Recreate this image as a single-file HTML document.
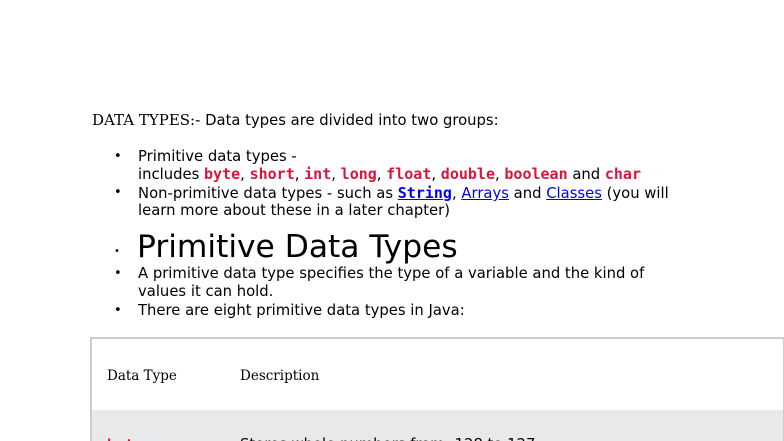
<!DOCTYPE html>
<html style="overflow:hidden;height:441px"><head><meta charset="utf-8"><style>
body{margin:0;width:784px;height:441px;overflow:hidden;background:#fff;position:relative;font-family:"DejaVu Sans",sans-serif;font-size:14.8px;color:#000}
.l{position:absolute;white-space:nowrap;line-height:18px}
.b{position:absolute;left:114px;font-size:13px}
.c{font-family:"DejaVu Sans Mono",monospace;font-weight:bold;color:#dc143c;font-size:15px}
a{color:#00e;text-decoration:underline}
.serif{font-family:"DejaVu Serif","Liberation Serif",serif}
</style></head><body>
<div class="l" style="left:92px;top:111px"><span class="serif" style="font-size:15px">DATA TYPES:</span>- Data types are divided into two groups:</div>
<div class="l b" style="top:148px">•</div>
<div class="l" style="left:138px;top:148px">Primitive data types -</div>
<div class="l" style="left:138px;top:165px">includes <span class="c">byte</span>, <span class="c">short</span>, <span class="c">int</span>, <span class="c">long</span>, <span class="c">float</span>, <span class="c">double</span>, <span class="c">boolean</span> and <span class="c">char</span></div>
<div class="l b" style="top:184px">•</div>
<div class="l" style="left:138px;top:184px">Non-primitive data types - such as <a class="c" style="color:#00e">String</a>, <a>Arrays</a> and <a>Classes</a> (you will</div>
<div class="l" style="left:138px;top:202px">learn more about these in a later chapter)</div>
<div class="l" style="left:114px;top:243px;font-size:10px">•</div>
<div class="l" style="left:137px;top:229px;font-size:31.3px;line-height:36px">Primitive Data Types</div>
<div class="l b" style="top:265px">•</div>
<div class="l" style="left:138px;top:265px">A primitive data type specifies the type of a variable and the kind of</div>
<div class="l" style="left:138px;top:283px">values it can hold.</div>
<div class="l b" style="top:302px">•</div>
<div class="l" style="left:138px;top:302px">There are eight primitive data types in Java:</div>
<div style="position:absolute;left:90px;top:337px;width:691px;height:102px;overflow:hidden;border:1px solid #ccc;border-width:2px 2px 0 2px">
<div style="position:absolute;left:0;top:71px;right:0;bottom:0;background:#e7e9eb"></div>
<div class="l serif" style="left:15px;top:28px;font-size:13.5px">Data Type</div>
<div class="l serif" style="left:148px;top:28px;font-size:13.5px">Description</div>
<div style="position:absolute;left:15px;top:97px;height:5px;overflow:hidden;line-height:18px;white-space:nowrap"><span class="c">byte</span></div>
<div style="position:absolute;left:148px;top:97px;height:5px;overflow:hidden;line-height:18px;white-space:nowrap">Stores whole numbers from -128 to 127</div>
</div>
</body></html>
